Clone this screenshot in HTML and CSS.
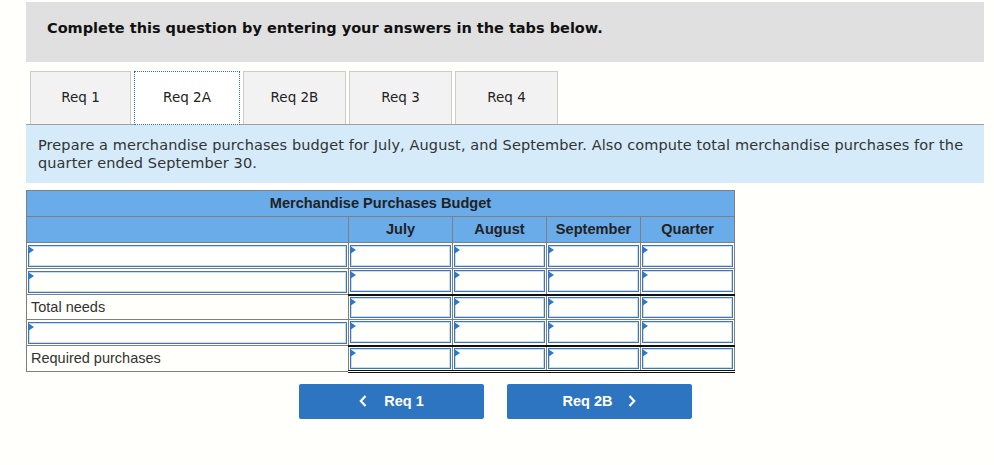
FILE: index.html
```html
<!DOCTYPE html>
<html>
<head>
<meta charset="utf-8">
<link rel="stylesheet" href="styles.css">
</head>
<body>
<div class="wrap">
  <div class="banner">Complete this question by entering your answers in the tabs below.</div>
  <div class="tabs">
    <div class="tab first">Req 1</div>
    <div class="tab active">Req 2A</div>
    <div class="tab">Req 2B</div>
    <div class="tab">Req 3</div>
    <div class="tab">Req 4</div>
  </div>
  <div class="instr">Prepare a merchandise purchases budget for July, August, and September. Also compute total merchandise purchases for the quarter ended September 30.</div>
  <table class="budget">
    <colgroup>
      <col class="c-label"><col class="c-july"><col class="c-m"><col class="c-m"><col class="c-m">
    </colgroup>
    <tr class="title"><th colspan="5">Merchandise Purchases Budget</th></tr>
    <tr class="head"><th></th><th>July</th><th>August</th><th>September</th><th>Quarter</th></tr>
    <tr><td><div class="inp"></div></td><td><div class="inp"></div></td><td><div class="inp"></div></td><td><div class="inp"></div></td><td><div class="inp"></div></td></tr>
    <tr><td><div class="inp"></div></td><td><div class="inp"></div></td><td><div class="inp"></div></td><td><div class="inp"></div></td><td><div class="inp"></div></td></tr>
    <tr class="sumrow"><td class="lbl">Total needs</td><td class="sum"><div class="inp"></div></td><td class="sum"><div class="inp"></div></td><td class="sum"><div class="inp"></div></td><td class="sum"><div class="inp"></div></td></tr>
    <tr><td><div class="inp"></div></td><td><div class="inp"></div></td><td><div class="inp"></div></td><td><div class="inp"></div></td><td><div class="inp"></div></td></tr>
    <tr class="sumrow"><td class="lbl">Required purchases</td><td class="sum total"><div class="inp"></div></td><td class="sum total"><div class="inp"></div></td><td class="sum total"><div class="inp"></div></td><td class="sum total"><div class="inp"></div></td></tr>
  </table>
  <div class="nav">
    <button class="btn"><svg class="chev" width="8" height="12" viewBox="0 0 8 12"><path d="M6.5 1 L1.8 6 L6.5 11" fill="none" stroke="#fff" stroke-width="2.2"/></svg>Req 1</button>
    <button class="btn">Req 2B<svg class="chev r" width="8" height="12" viewBox="0 0 8 12"><path d="M1.5 1 L6.2 6 L1.5 11" fill="none" stroke="#fff" stroke-width="2.2"/></svg></button>
  </div>
</div>
</body>
</html>
```

FILE: styles.css
```css
html, body {
  margin: 0;
  padding: 0;
  background: #fffffc;
}
.wrap {
  padding: 2px 0 0 26px;
  width: 958px;
  font-family: "DejaVu Sans", Verdana, sans-serif;
}
.banner {
  height: 60px;
  background: #e0e0e0;
  padding-left: 21px;
  line-height: 52px;
  font-weight: bold;
  font-size: 14.5px;
  color: #111;
}
.tabs {
  display: flex;
  gap: 3px;
  margin-top: 9px;
  padding-left: 4px;
  height: 53px;
  border-bottom: 1px solid #a0a0a0;
  align-items: flex-end;
}
.tab {
  box-sizing: border-box;
  width: 103px;
  height: 53px;
  background: #f2f2f2;
  border: 1px solid #cccccc;
  border-bottom: none;
  display: flex;
  align-items: center;
  justify-content: center;
  font-size: 13.5px;
  color: #222;
  padding-bottom: 2px;
}
.tab.first {
  width: 101px;
}
.tab.active {
  background: #ffffff;
  width: 106px;
  border: 1px dotted #2a6fc9;
  height: 54px;
  margin-bottom: -1px;
  position: relative;
}
.instr {
  background: #d5ebf9;
  height: 58px;
  box-sizing: border-box;
  padding: 11px 12px 0 12px;
  font-size: 14.5px;
  line-height: 18px;
  letter-spacing: 0.1px;
  color: #333;
}
.budget {
  margin-top: 7px;
  border-collapse: collapse;
  table-layout: fixed;
  width: 708px;
  font-family: "Liberation Sans", Arial, sans-serif;
}
.c-label { width: 322px; }
.c-july { width: 104px; }
.c-m { width: 94px; }
.budget th, .budget td {
  border: 1px solid #7f7f7f;
  height: 26px;
  padding: 0;
  box-sizing: border-box;
}
.title th, .head th {
  background: #6aabea;
  font-size: 14.6px;
  font-weight: bold;
  color: #222;
  text-align: center;
  padding-bottom: 2px;
}
.budget td {
  background: #fffffc;
  padding: 1px;
}
.budget .sumrow td {
  height: 25px;
}
.budget td.lbl {
  font-size: 14.5px;
  color: #333;
  padding: 0 4px;
  vertical-align: middle;
}
.inp {
  position: relative;
  height: 22px;
  box-sizing: border-box;
  border: 1px solid #3b77bf;
  box-shadow: inset 0 0 0 1px #c9dcf1;
  background: #fffffc;
}
.sumrow .inp {
  height: 21px;
}
.inp::before {
  content: "";
  position: absolute;
  left: -1px;
  top: 0;
  width: 0;
  height: 0;
  border-top: 4px solid transparent;
  border-bottom: 4px solid transparent;
  border-left: 6px solid #2f78c8;
}
.budget td.sum {
  border-top: 2px solid #111;
}
.budget td.total {
  border-bottom: 3px double #111;
}
.nav {
  display: flex;
  gap: 23px;
  margin: 11px 0 0 273px;
}
.btn {
  width: 185px;
  height: 35px;
  border: none;
  border-radius: 2px;
  background: #2d74c1;
  color: #fff;
  font-family: "Liberation Sans", Arial, sans-serif;
  font-weight: bold;
  font-size: 14.5px;
  display: flex;
  align-items: center;
  justify-content: center;
  padding: 0;
}
.chev {
  margin-right: 17px;
}
.chev.r {
  margin-right: 0;
  margin-left: 16px;
}
```
